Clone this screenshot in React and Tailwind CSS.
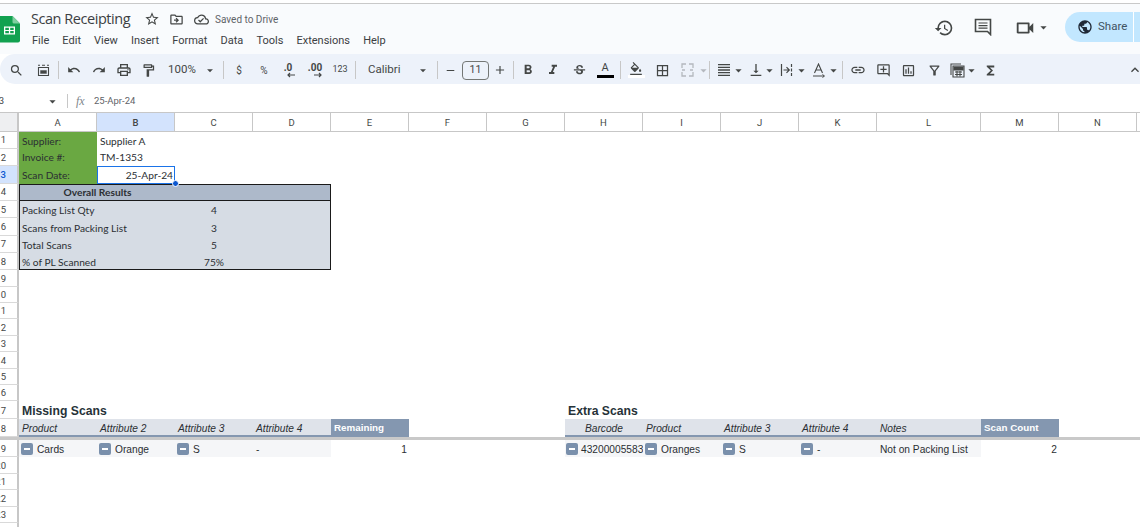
import React from "react";
import {
  MdSearch, MdUndo, MdRedo, MdOutlinePrint, MdOutlineFormatPaint, MdArrowDropDown, MdAdd, MdRemove,
  MdFormatBold, MdFormatItalic, MdStrikethroughS, MdFormatColorFill, MdBorderAll, MdFormatAlignJustify,
  MdVerticalAlignBottom, MdLink, MdOutlineAddComment, MdOutlineInsertChart, MdOutlineFilterAlt, MdFunctions,
  MdExpandLess, MdHistory, MdOutlineVideocam, MdPublic, MdStarBorder, MdOutlineDriveFileMove, MdOutlineCloudDone,
} from "react-icons/md";

const ink = "text-[#444746]";

function SheetsLogo() {
  return (
    <svg width="20" height="27" viewBox="0 0 20 27" className="shrink-0">
      <path d="M-6 0H12.5L20 7.5V24.5a2 2 0 0 1-2 2H-6Z" fill="#12a150" />
      <path d="M12.5 0L20 7.5H14a1.5 1.5 0 0 1-1.5-1.5Z" fill="#7fd0a0" />
      <path d="M4 10.5H15V18.5H4ZM5.3 11.8V13.9H8.9V11.8ZM10.2 11.8V13.9H13.7V11.8ZM5.3 15.1V17.2H8.9V15.1ZM10.2 15.1V17.2H13.7V15.1Z" fill="#fff" fillRule="evenodd" />
    </svg>
  );
}

function CommentIcon() {
  return (
    <svg width="18" height="18" viewBox="0 0 18 18" fill="none" stroke="#444746" strokeWidth="1.6">
      <path d="M1.5 1.5H16.5V16.5L13.5 13.5H1.5Z" />
      <path d="M4.5 5H13.5M4.5 7.6H13.5M4.5 10.2H13.5" strokeWidth="1.2" />
    </svg>
  );
}

function TableMenuIcon() {
  return (
    <svg width="13" height="13" viewBox="0 0 13 13" fill="none" stroke="#444746" strokeWidth="1.1">
      <path d="M1.5 3.5H11.5V11.5H1.5Z" />
      <path d="M1 1.2H3M5 1.2H8M10 1.2H12" />
      <path d="M3.5 6.5H9.5V9.5H3.5Z" fill="#444746" strokeWidth=".4" />
    </svg>
  );
}

function MergeIcon() {
  return (
    <svg width="13" height="14" viewBox="0 0 13 14" fill="none" stroke="#b4b8be" strokeWidth="1.3">
      <path d="M1 5V1H5M8 1H12V5M1 9V13H5M8 13H12V9M1 7H4M9 7H12" />
    </svg>
  );
}

function WrapIcon() {
  return (
    <svg width="13" height="12" viewBox="0 0 13 12" fill="none" stroke="#444746" strokeWidth="1.2">
      <path d="M1.5 0V12" />
      <path d="M11.5 0V3M11.5 4.5V7.5M11.5 9V12" />
      <path d="M3.5 6H9M6.5 3.2L9.3 6L6.5 8.8" />
    </svg>
  );
}

function RotateIcon() {
  return (
    <svg width="14" height="15" viewBox="0 0 14 15" fill="none" stroke="#444746" strokeWidth="1.1">
      <path d="M2.5 10L6.5 1L10.5 10M4 7H9" />
      <path d="M1 13H12M10.5 11.5L12.5 13L10.5 14.5" strokeWidth="1" />
    </svg>
  );
}

function CalcIcon() {
  return (
    <svg width="15" height="15" viewBox="0 0 15 15" fill="none" stroke="#444746" strokeWidth="1.1">
      <path d="M1 12V1H11" />
      <path d="M3 3H14V14H3Z" />
      <path d="M4 4H13V7H4Z" fill="#444746" />
      <path d="M5 9H12M5 11.5H12M7 8V13.5M10 8V13.5" />
    </svg>
  );
}

function Caret({ color = "text-[#444746]" }) {
  return (
    <span className={`w-[4px] flex justify-center items-center shrink-0 ${color}`}>
      <MdArrowDropDown size={15} className="shrink-0" />
    </span>
  );
}

function Sep() {
  return <span className="w-px h-[18px] bg-[#c7c7c7] shrink-0" />;
}

function B({ className = "", children }) {
  return <span className={`flex items-center justify-center shrink-0 h-full ${ink} ${className}`}>{children}</span>;
}

function Decimal({ label, dir }) {
  return (
    <span className="relative flex flex-col items-center leading-none font-bold text-[10px] text-[#444746] font-['Roboto',sans-serif]">
      <span className="h-[9px] leading-[9px]">{label}</span>
      <svg width="10" height="6" viewBox="0 0 10 6" fill="none" stroke="#444746" strokeWidth="1.2" className="ml-[5px]">
        {dir === "left" ? <path d="M9 3H2M4 1L2 3L4 5" /> : <path d="M1 3H8M6 1L8 3L6 5" />}
      </svg>
    </span>
  );
}

function Header() {
  const menus = ["File", "Edit", "View", "Insert", "Format", "Data", "Tools", "Extensions", "Help"];
  return (
    <div className="h-[50px] bg-[#f9fbfd] flex shrink-0">
      <div className="w-[31px] pt-[12px] shrink-0"><SheetsLogo /></div>
      <div className="flex flex-col pt-[3px]">
        <div className="flex items-center h-[24px]">
          <span className="text-[14.5px] text-[#3c4043] w-[99px] whitespace-nowrap font-['Open_Sans',sans-serif] tracking-[-0.45px]">Scan Receipting</span>
          <span className="ml-[14px] flex text-[#444746]"><MdStarBorder size={16} /></span>
          <span className="ml-[9px] flex text-[#444746]"><MdOutlineDriveFileMove size={15} /></span>
          <span className="ml-[10px] flex text-[#444746]"><MdOutlineCloudDone size={15} /></span>
          <span className="ml-[6px] text-[10px] text-[#5f6368] whitespace-nowrap font-['Roboto',sans-serif]">Saved to Drive</span>
        </div>
        <div className="flex gap-[13.1px] pl-px text-[11px] text-[#3c4043] mt-[1px] h-[18px] items-center font-['Roboto',sans-serif]">
          {menus.map((m) => <span key={m}>{m}</span>)}
        </div>
      </div>
      <div className="ml-auto flex items-start pt-[8px]">
        <span className="flex mt-[6px] mr-[20px] text-[#444746]"><MdHistory size={20} /></span>
        <span className="flex mt-[6px] mr-[22px]"><CommentIcon /></span>
        <span className="flex mt-[5px] text-[#444746]"><MdOutlineVideocam size={22} /></span>
        <span className="flex mt-[8px] mr-[14px] text-[#444746]"><MdArrowDropDown size={15} /></span>
        <div className="w-[75px] h-[30px] rounded-l-[15px] bg-[#c2e7ff] flex items-center pl-[12px] relative">
          <span className="flex text-[#1f2937]"><MdPublic size={16} /></span>
          <span className="ml-[5px] text-[11.5px] text-[#41525f] font-['Roboto',sans-serif]">Share</span>
          <span className="absolute right-[6px] top-0 bottom-0 w-px bg-white" />
        </div>
      </div>
    </div>
  );
}

function Toolbar() {
  return (
    <div className="h-[30px] pt-[2px] bg-[#edf2fa] rounded-l-[15px] flex items-center pl-[4px] shrink-0 overflow-hidden font-['Roboto',sans-serif] text-[#444746]">
      <B className="w-[25px]"><MdSearch size={15} /></B>
      <B className="w-[29px]"><TableMenuIcon /></B>
      <Sep />
      <B className="w-[30px]"><MdUndo size={14} /></B>
      <B className="w-[20px]"><MdRedo size={14} /></B>
      <B className="w-[30px]"><MdOutlinePrint size={16} /></B>
      <B className="w-[18px]"><MdOutlineFormatPaint size={15} /></B>
      <B className="w-[46px] justify-start pl-[11px] text-[11.5px] whitespace-nowrap">100%</B>
      <B className="w-[14px]"><MdArrowDropDown size={15} /></B>
      <span className="w-[6px] shrink-0" />
      <Sep />
      <B className="w-[30px] text-[10px]">$</B>
      <B className="w-[20px] text-[10px]">%</B>
      <B className="w-[28px]"><Decimal label=".0" dir="left" /></B>
      <B className="w-[26px]"><Decimal label=".00" dir="right" /></B>
      <B className="w-[24px] text-[9px]">123</B>
      <span className="w-[3px] shrink-0" />
      <Sep />
      <B className="w-[60px] justify-start pl-[12px] text-[11.5px]">Calibri</B>
      <B className="w-[14px]"><MdArrowDropDown size={15} /></B>
      <span className="w-[7px] shrink-0" />
      <Sep />
      <B className="w-[24px]"><MdRemove size={13} /></B>
      <span className="w-[27px] h-[19px] shrink-0 border border-[#747775] rounded-[4px] flex items-center justify-center text-[10.5px]">11</span>
      <B className="w-[22px]"><MdAdd size={14} /></B>
      <span className="w-[2px] shrink-0" />
      <Sep />
      <B className="w-[28px]"><MdFormatBold size={16} /></B>
      <B className="w-[22px]"><MdFormatItalic size={16} /></B>
      <B className="w-[30px]"><MdStrikethroughS size={15} /></B>
      <B className="w-[22px]">
        <span className="flex flex-col items-center w-[17px]">
          <span className="text-[11px] leading-[12px] h-[13px]">A</span>
          <span className="w-[17px] h-[3px] bg-black" />
        </span>
      </B>
      <span className="w-[4px] shrink-0" />
      <Sep />
      <B className="w-[30px]">
        <span className="flex flex-col items-center w-[17px]">
          <span className="flex h-[13px] items-center"><MdFormatColorFill size={14} /></span>
          <span className="w-[17px] h-[3px] bg-white" />
        </span>
      </B>
      <B className="w-[22px]"><MdBorderAll size={15} /></B>
      <B className="w-[28px]"><MergeIcon /></B>
      <Caret color="text-[#b4b8be]" />
      <span className="w-[4px] shrink-0" />
      <Sep />
      <B className="ml-[2px] w-[24px]"><MdFormatAlignJustify size={16} /></B>
      <Caret />
      <B className="ml-[5px] w-[22px]"><MdVerticalAlignBottom size={16} /></B>
      <Caret />
      <B className="ml-[4px] w-[22px]"><WrapIcon /></B>
      <span className="ml-[2px] flex"><Caret /></span>
      <B className="ml-[5px] w-[22px]"><RotateIcon /></B>
      <span className="ml-px flex"><Caret /></span>
      <span className="w-[7px] shrink-0" />
      <Sep />
      <B className="w-[30px]"><MdLink size={16} /></B>
      <B className="w-[20px]"><MdOutlineAddComment size={15} /></B>
      <B className="w-[30px]"><MdOutlineInsertChart size={15} /></B>
      <B className="w-[22px]"><MdOutlineFilterAlt size={15} /></B>
      <B className="w-[24px]"><CalcIcon /></B>
      <Caret />
      <B className="w-[34px]"><MdFunctions size={15} /></B>
      <B className="ml-auto w-[16px] -mr-[3px]"><MdExpandLess size={16} /></B>
    </div>
  );
}

function FormulaBar() {
  return (
    <div className="h-[29px] pt-[6px] bg-white border-b border-[#c7c7c7] flex items-center shrink-0 font-['Roboto',sans-serif] text-[#444746] overflow-hidden">
      <span className="w-[4px] flex justify-end text-[9.5px] shrink-0"><span className="shrink-0">B3</span></span>
      <span className="ml-[41px] flex"><MdArrowDropDown size={15} /></span>
      <span className="ml-[7px] w-px h-[14px] bg-[#c7c7c7]" />
      <span className="ml-[8px] w-[18px] text-[12px] italic font-['Liberation_Serif',serif] text-[#80868b]">fx</span>
      <span className="text-[9.5px] text-[#5f6368]">25-Apr-24</span>
    </div>
  );
}

const gridCols = "grid grid-cols-[19px_78px_78px_78px_78px_78px_78px_78px_78px_78px_78px_78px_104px_78px_78px_78px]";

function ColumnHeaders() {
  const letters = ["A", "B", "C", "D", "E", "F", "G", "H", "I", "J", "K", "L", "M", "N", "O"];
  return (
    <div className={`${gridCols} h-[18.5px] shrink-0 border-b border-[#c7c7c7] font-['Roboto',sans-serif] text-[9.5px] text-[#444746]`}>
      <div className="bg-[#eeeff1] border-r-2 border-[#c7c7c7]" />
      {letters.map((l) => (
        <div key={l} className={`flex items-center justify-center pt-[2px] border-r border-[#c7c7c7] ${l === "B" ? "bg-[#d3e3fd] font-medium" : "bg-white"}`}>{l}</div>
      ))}
    </div>
  );
}

function RowLabel({ n, active }) {
  return (
    <div className={`border-r-2 border-r-[#c7c7c7] border-b border-b-[#d9d9d9] pt-[1px] flex items-center overflow-hidden text-[9.5px] leading-none font-['Roboto',sans-serif] ${active ? "bg-[#d3e3fd] text-[#0b57d0] font-medium" : "bg-white text-[#444746]"}`}>
      <span className="w-[6px] flex justify-end shrink-0"><span className="shrink-0">{n}</span></span>
    </div>
  );
}

function Row({ n, h, active, children }) {
  return (
    <div className={`${gridCols} ${h} shrink-0`}>
      <RowLabel n={n} active={active} />
      {children}
    </div>
  );
}

const calibriBase = "font-['Lato',sans-serif] text-[10.2px] leading-none text-[#2b2f33] whitespace-nowrap";
const calibri = `${calibriBase} pt-[2px]`;
const arial = "font-['Liberation_Sans',sans-serif] text-[10.2px] leading-none text-[#2b2f33] whitespace-nowrap";

function Chip() {
  return (
    <span className="w-[12px] h-[12px] bg-[#7a90ac] rounded-[2px] flex items-center justify-center shrink-0">
      <span className="w-[6px] h-[2px] bg-white" />
    </span>
  );
}

function ChipCell({ text }) {
  return (
    <div className={`bg-[#f5f6f8] flex items-center pl-[2px] ${arial}`}>
      <Chip />
      <span className="ml-[4px] pt-[2px]">{text}</span>
    </div>
  );
}

function HeadCell({ children, extra = "pl-[3px]" }) {
  return (
    <div className={`bg-[#dfe3ea] border-b-2 border-[#8497b0] pt-[3px] flex items-center italic ${extra} ${arial}`}>{children}</div>
  );
}

function DarkHead({ children }) {
  return (
    <div className="bg-[#8497b0] flex items-center pl-[3px] text-white font-bold text-[9.8px] leading-none font-['Liberation_Sans',sans-serif] whitespace-nowrap">{children}</div>
  );
}

function Sheet() {
  const h8 = "h-[17.35px]";
  const h16 = "h-[16.4px]";
  const summary = [["Packing List Qty", "4"], ["Scans from Packing List", "3"], ["Total Scans", "5"], ["% of PL Scanned", "75%"]];
  const sectionTitle = "col-span-5 flex items-center pl-[3px] pt-[1px] font-bold text-[12.2px] leading-none text-[#263238] font-['Liberation_Sans',sans-serif]";
  return (
    <div className="flex flex-col">
      <Row n={1} h={h8}>
        <div className={`bg-[#6aa842] flex items-center pl-[3px] ${calibri}`}>Supplier:</div>
        <div className={`flex items-center pl-[3px] ${calibri}`}>Supplier A</div>
      </Row>
      <Row n={2} h={h8}>
        <div className={`bg-[#6aa842] flex items-center pl-[3px] ${calibriBase}`}>Invoice #:</div>
        <div className={`flex items-center pl-[3px] ${calibriBase}`}>TM-1353</div>
      </Row>
      <Row n={3} h={h8} active>
        <div className={`bg-[#6aa842] flex items-center pl-[3px] ${calibriBase}`}>Scan Date:</div>
        <div className={`relative border-[1.5px] border-[#1a73e8] flex items-center justify-end pr-[1px] ${calibriBase}`}>
          25-Apr-24
          <span className="absolute -right-[4.5px] -bottom-[4.5px] w-[7px] h-[7px] rounded-full bg-[#0b57d0] border border-white z-10" />
        </div>
      </Row>
      <Row n={4} h={h8}>
        <div className={`col-span-2 bg-[#adb9ca] border-t border-l border-b border-[#1a1a1a] flex items-center justify-center font-bold ${calibriBase}`}>Overall Results</div>
        <div className="col-span-2 bg-[#adb9ca] border-t border-r border-b border-[#1a1a1a]" />
      </Row>
      {summary.map(([label, value], i) => (
        <Row key={label} n={5 + i} h={h8}>
          <div className={`col-span-2 bg-[#d6dce4] border-l border-[#1a1a1a] flex items-center pl-[2px] ${i === 3 ? "border-b" : ""} ${calibri}`}>{label}</div>
          <div className={`bg-[#d6dce4] border-[#1a1a1a] flex items-center justify-center ${i === 3 ? "border-b" : ""} ${calibri}`}>{value}</div>
          <div className={`bg-[#d6dce4] border-r border-[#1a1a1a] ${i === 3 ? "border-b" : ""}`} />
        </Row>
      ))}
      {[9, 10, 11, 12, 13, 14, 15, 16].map((n) => <Row key={n} n={n} h={h16} />)}
      <Row n={17} h="h-[18px]">
        <div className={sectionTitle}>Missing Scans</div>
        <div className="col-span-2" />
        <div className={sectionTitle}>Extra Scans</div>
      </Row>
      <Row n={18} h="h-[18px]">
        <HeadCell>Product</HeadCell>
        <HeadCell>Attribute 2</HeadCell>
        <HeadCell>Attribute 3</HeadCell>
        <HeadCell>Attribute 4</HeadCell>
        <DarkHead>Remaining</DarkHead>
        <div className="col-span-2" />
        <HeadCell extra="pl-[20px]">Barcode</HeadCell>
        <HeadCell>Product</HeadCell>
        <HeadCell>Attribute 3</HeadCell>
        <HeadCell>Attribute 4</HeadCell>
        <HeadCell>Notes</HeadCell>
        <DarkHead>Scan Count</DarkHead>
      </Row>
      <div className="h-[3px] bg-[#c9c9c9] shrink-0" />
      <Row n={19} h="h-[17px]">
        <ChipCell text="Cards" />
        <ChipCell text="Orange" />
        <ChipCell text="S" />
        <div className={`bg-[#f5f6f8] flex items-center pl-[3px] pt-[2px] ${arial}`}>-</div>
        <div className={`flex items-center justify-end pr-[2px] pt-[2px] ${arial}`}>1</div>
        <div className="col-span-2" />
        <div className={`bg-[#f5f6f8] flex items-center pl-[1px] overflow-hidden ${arial}`}>
          <Chip />
          <span className="ml-[3px] pt-[2px]">43200005583</span>
        </div>
        <ChipCell text="Oranges" />
        <ChipCell text="S" />
        <ChipCell text="-" />
        <div className={`bg-[#f5f6f8] flex items-center pl-[3px] pt-[2px] ${arial}`}>Not on Packing List</div>
        <div className={`flex items-center justify-end pr-[2px] pt-[2px] ${arial}`}>2</div>
      </Row>
      {[20, 21, 22, 23, 24].map((n) => <Row key={n} n={n} h={h16} />)}
    </div>
  );
}

export default function App() {
  return (
    <div className="w-[1140px] h-[527px] overflow-hidden bg-white flex flex-col">
      <div className="h-[4px] shrink-0 bg-white border-b border-[#c9c9c9]" />
      <Header />
      <Toolbar />
      <FormulaBar />
      <ColumnHeaders />
      <Sheet />
    </div>
  );
}
